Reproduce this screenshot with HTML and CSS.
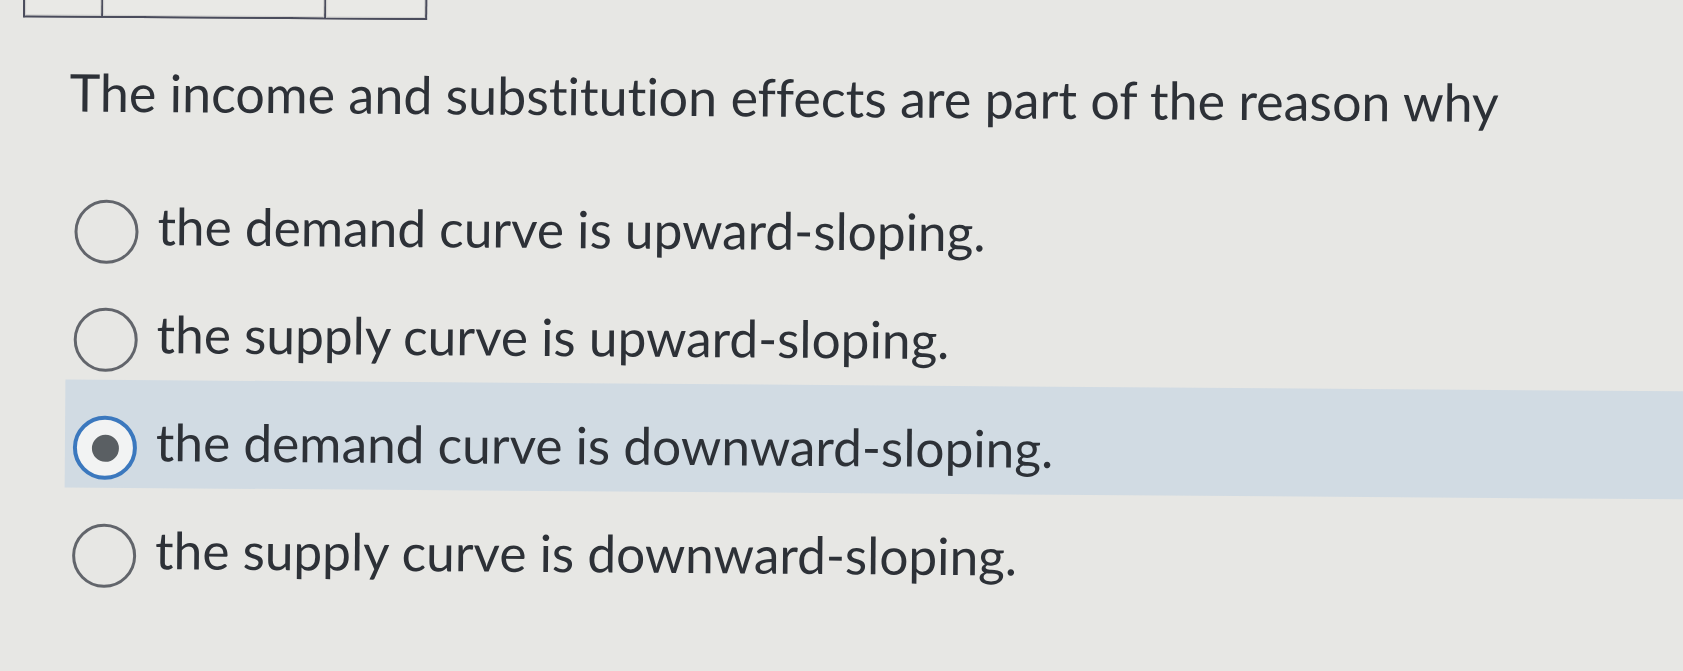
FILE: index.html
```html
<!DOCTYPE html>
<html lang="en">
<head>
<meta charset="utf-8">
<title>Question</title>
<link rel="stylesheet" href="styles.css">
</head>
<body>
<div class="page">
  <div class="table-stub">
    <div class="cell c1"></div>
    <div class="cell c2"></div>
    <div class="cell c3"></div>
  </div>
  <div class="question">The income and substitution effects are part of the reason why</div>
  <div class="options">
    <div class="option">
      <span class="radio"></span>
      <span class="label">the demand curve is upward-sloping.</span>
    </div>
    <div class="option">
      <span class="radio"></span>
      <span class="label">the supply curve is upward-sloping.</span>
    </div>
    <div class="option selected">
      <span class="radio"><span class="dot"></span></span>
      <span class="label">the demand curve is downward-sloping.</span>
    </div>
    <div class="option">
      <span class="radio"></span>
      <span class="label">the supply curve is downward-sloping.</span>
    </div>
  </div>
</div>
</body>
</html>
```

FILE: styles.css
```css
html, body {
  margin: 0;
  padding: 0;
}
body {
  background: #e7e7e4;
  font-family: "Lato", "Noto Sans", "Liberation Sans", sans-serif;
  color: #2d3137;
  width: 1683px;
  height: 671px;
  overflow: hidden;
}
.page {
  display: flex;
  flex-direction: column;
  width: 1730px;
  transform: rotate(0.42deg);
  transform-origin: 0 300px;
}
.table-stub {
  display: flex;
  margin-top: -4px;
  margin-left: 21px;
  width: 404px;
  height: 21px;
  box-sizing: border-box;
  border: 2px solid #4a4c5c;
  border-top: none;
  background: #4a4c5c;
  gap: 2px;
}
.cell {
  height: 19px;
  background: #e9e9e6;
  box-sizing: border-box;
  border: 1px solid #d2d2d0;
  border-top: none;
}
.c1 { width: 76px; }
.c2 { width: 221px; }
.c3 { flex: 1; }

.question {
  margin-top: 44px;
  margin-left: 68px;
  font-size: 52px;
  line-height: 60px;
  font-feature-settings: "liga" 0;
}
.options {
  margin-top: 42px;
  display: flex;
  flex-direction: column;
}
.option {
  display: flex;
  align-items: center;
  height: 108px;
  box-sizing: border-box;
  padding-top: 28px;
  margin-left: 66px;
  padding-left: 8px;
}
.option.selected {
  background: #d1dbe3;
}
.radio {
  width: 64px;
  height: 64px;
  box-sizing: border-box;
  border: 3px solid #62656b;
  border-radius: 50%;
  flex: none;
  display: flex;
  align-items: center;
  justify-content: center;
}
.selected .radio {
  border: 4px solid #3b78be;
  background: #f2f3f3;
}
.dot {
  width: 27px;
  height: 27px;
  border-radius: 50%;
  background: #5a5f63;
}
.label {
  margin-left: 19px;
  font-size: 51.4px;
  line-height: 60px;
  margin-bottom: 14px;
  font-feature-settings: "liga" 0;
}
```
